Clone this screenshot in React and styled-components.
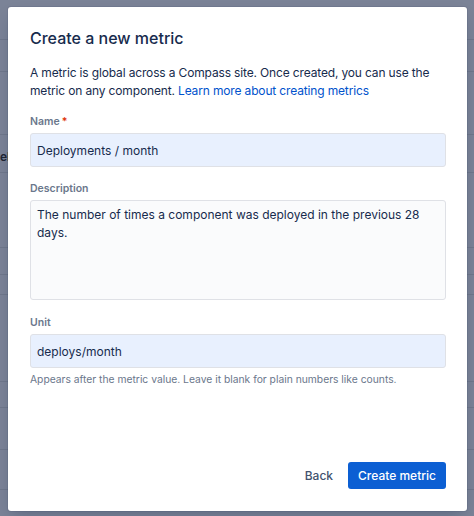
import React from "react";
import styled, { createGlobalStyle } from "styled-components";

const Global = createGlobalStyle`
  html, body { margin: 0; padding: 0; }
  body {
    width: 474px; height: 516px; overflow: hidden;
    font-family: Inter, "Noto Sans", Roboto, sans-serif;
    background: #7b8397;
  }
  * { box-sizing: border-box; }
`;

const Page = styled.div`
  position: relative;
  width: 474px;
  height: 516px;
  background: #7b8397;
  overflow: hidden;
`;

const Backdrop = styled.div`
  display: flex;
  flex-direction: column;
`;

const BgRow = styled.div`
  height: ${(p) => p.$h}px;
  border-bottom: 1px solid #6f778b;
  display: flex;
  align-items: center;
  padding-top: 6px;
  font-size: 12px;
  font-weight: 600;
  color: #1f2533;
`;

const Modal = styled.div`
  position: absolute;
  left: 8px;
  top: 7px;
  width: 459px;
  height: 504px;
  background: #fff;
  border-radius: 3px;
  box-shadow: 0 0 0 1px rgba(9, 30, 66, 0.08), 0 8px 16px -4px rgba(9, 30, 66, 0.25);
  padding: 21px 21px 22px 22px;
  display: flex;
  flex-direction: column;
  color: #172b4d;
`;

const Title = styled.h1`
  margin: 0;
  font-size: 16px;
  line-height: 20px;
  font-weight: 500;
  color: #172b4d;
`;

const Intro = styled.p`
  margin: 16px 0 0;
  font-size: 12px;
  line-height: 18px;
  letter-spacing: -0.15px;
  color: #172b4d;
`;

const Link = styled.a`
  color: #0052cc;
  text-decoration: none;
`;

const Field = styled.div`
  display: flex;
  flex-direction: column;
  margin-top: ${(p) => p.$mt}px;
`;

const Label = styled.label`
  font-size: 10.5px;
  line-height: 14px;
  font-weight: 600;
  color: #6b778c;
  margin-bottom: 4px;
`;

const Req = styled.span`
  color: #de350b;
  margin-left: 2px;
`;

const Input = styled.div`
  height: 34px;
  border: 1px solid #dfe1e6;
  border-radius: 3px;
  background: ${(p) => (p.$filled ? "#e8f0fe" : "#fafbfc")};
  padding: 0 6px;
  display: flex;
  align-items: center;
  font-size: 12px;
  color: #172b4d;
`;

const TextArea = styled.div`
  height: 100px;
  border: 1px solid #dfe1e6;
  border-radius: 3px;
  background: #fafbfc;
  padding: 5px 6px;
  font-size: 12px;
  line-height: 18px;
  color: #172b4d;
`;

const Help = styled.div`
  margin-top: 4px;
  font-size: 10.3px;
  line-height: 14px;
  color: #6b778c;
`;

const Footer = styled.div`
  margin-top: auto;
  display: flex;
  justify-content: flex-end;
  align-items: center;
  gap: 5px;
`;

const Button = styled.button`
  height: 27px;
  padding: 0 10px;
  border: none;
  border-radius: 3px;
  font-family: inherit;
  font-size: 12px;
  font-weight: 500;
  cursor: pointer;
  background: ${(p) => (p.$primary ? "#0c5fd3" : "transparent")};
  color: ${(p) => (p.$primary ? "#fff" : "#42526e")};
`;

const rows = [40, 32, 63, 38, 75, 27, 20, 87, 26, 42, 40];

export default function App() {
  return (
    <Page>
      <Global />
      <Backdrop>
        {rows.map((h, i) => (
          <BgRow key={i} $h={h}>
            {i === 3 ? "el" : ""}
          </BgRow>
        ))}
      </Backdrop>
      <Modal>
        <Title>Create a new metric</Title>
        <Intro>
          A metric is global across a Compass site. Once created, you can use the
          metric on any component. <Link href="#">Learn more about creating metrics</Link>
        </Intro>
        <Field $mt={15}>
          <Label>
            Name<Req>*</Req>
          </Label>
          <Input $filled>Deployments / month</Input>
        </Field>
        <Field $mt={15}>
          <Label>Description</Label>
          <TextArea>
            The number of times a component was deployed in the previous 28 days.
          </TextArea>
        </Field>
        <Field $mt={16}>
          <Label>Unit</Label>
          <Input $filled>deploys/month</Input>
          <Help>Appears after the metric value. Leave it blank for plain numbers like counts.</Help>
        </Field>
        <Footer>
          <Button>Back</Button>
          <Button $primary>Create metric</Button>
        </Footer>
      </Modal>
    </Page>
  );
}
